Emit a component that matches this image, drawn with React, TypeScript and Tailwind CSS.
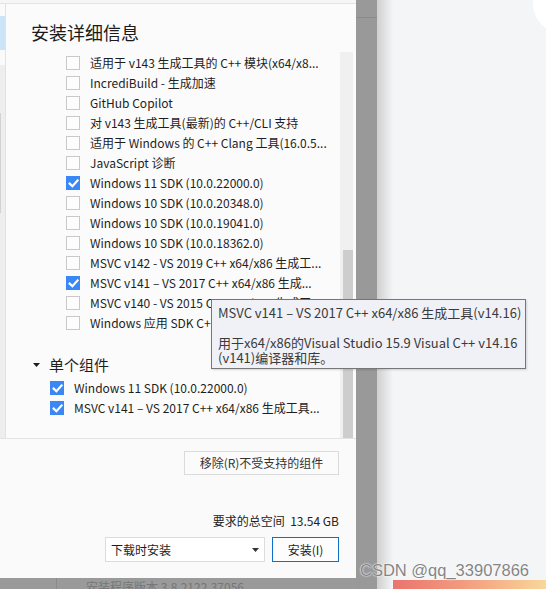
import React from "react";

function Box({ checked }: { checked?: boolean }) {
  if (checked) {
    return (
      <span className="flex h-[14px] w-[14px] shrink-0 items-center justify-center bg-[#3b87f5]">
        <svg width="11" height="11" viewBox="0 0 10 10">
          <path d="M1.5 5.1 L4 7.5 L8.7 2.3" stroke="white" strokeWidth="2" fill="none" strokeLinecap="square" />
        </svg>
      </span>
    );
  }
  return <span className="h-[14px] w-[14px] shrink-0 border border-[#c9c9c9] bg-[#fdfdfd]" />;
}

const rows: { t: string; c?: boolean }[] = [
  { t: "适用于 v143 生成工具的 C++ 模块(x64/x8..." },
  { t: "IncrediBuild - 生成加速" },
  { t: "GitHub Copilot" },
  { t: "对 v143 生成工具(最新)的 C++/CLI 支持" },
  { t: "适用于 Windows 的 C++ Clang 工具(16.0.5..." },
  { t: "JavaScript 诊断" },
  { t: "Windows 11 SDK (10.0.22000.0)", c: true },
  { t: "Windows 10 SDK (10.0.20348.0)" },
  { t: "Windows 10 SDK (10.0.19041.0)" },
  { t: "Windows 10 SDK (10.0.18362.0)" },
  { t: "MSVC v142 - VS 2019 C++ x64/x86 生成工..." },
  { t: "MSVC v141 – VS 2017 C++ x64/x86 生成...", c: true },
  { t: "MSVC v140 - VS 2015 C++ x64/x86 生成工..." },
  { t: "Windows 应用 SDK C++ 模板" },
];

export default function App() {
  return (
    <div className="relative flex h-[589px] w-[546px] overflow-hidden bg-[#f4f5f7] font-['Noto_Sans_CJK_SC','Noto_Sans',sans-serif] text-[#1e1e1e]">
      {/* installer window */}
      <div className="flex w-[356px] shrink-0 flex-col bg-[#fafafa]">
        <div className="h-[4px] shrink-0 border-b border-[#e4e4e4] bg-[#f6f6f6]" />
        <div className="flex h-[435px] shrink-0 border-b border-[#e3e3e3]">
          {/* left strip */}
          <div className="flex w-[6px] shrink-0 flex-col border-r border-[#e2e2e2]">
            <div className="h-[12px] bg-[#fafafa]" />
            <div className="h-[34px] bg-[#cce4f7]" />
            <div className="h-[15px] bg-[#fafafa]" />
            <div className="flex-1 bg-[#eeeeee]">
              <div className="ml-0 mt-[48px] h-[100px] w-[1px] bg-[#d2d2d2]" />
            </div>
          </div>
          {/* content */}
          <div className="flex flex-1 flex-col bg-[#fbfbfb]">
            <div className="pl-[25px] pt-[16px] text-[18px] leading-[24px] text-[#1b1b1b]">安装详细信息</div>
            <div className="mt-[8px] flex flex-1">
              <div className="flex-1 pt-[1px] text-[12px]">
                {rows.map((r, i) => (
                  <div key={i} className="flex h-[20px] items-center pl-[60px]">
                    <Box checked={r.c} />
                    <span className="ml-[10px] whitespace-nowrap leading-[20px]">{r.t}</span>
                  </div>
                ))}
                <div className="mt-[22px] flex h-[20px] items-center pl-[27px]">
                  <svg width="7" height="4" viewBox="0 0 7 4">
                    <path d="M0 0 L7 0 L3.5 4 Z" fill="#1e1e1e" />
                  </svg>
                  <span className="ml-[9px] text-[15px] leading-[20px]">单个组件</span>
                </div>
                <div className="mt-[3px] flex h-[20px] items-center pl-[44px]">
                  <Box checked />
                  <span className="ml-[10px] whitespace-nowrap">Windows 11 SDK (10.0.22000.0)</span>
                </div>
                <div className="flex h-[20px] items-center pl-[44px]">
                  <Box checked />
                  <span className="ml-[10px] whitespace-nowrap">MSVC v141 – VS 2017 C++ x64/x86 生成工具...</span>
                </div>
              </div>
              <div className="flex w-[13px] shrink-0 flex-col bg-[#f0f0f0]">
                <div className="ml-[3px] mt-[198px] flex-1 bg-[#cdcdcd]" />
              </div>
              <div className="w-[3px] shrink-0" />
            </div>
          </div>
        </div>
        {/* bottom area */}
        <div className="flex flex-1 flex-col items-end pr-[17px] text-[12px]">
          <div className="mt-[12px] flex h-[24px] w-[155px] items-center justify-center border border-[#dadada] bg-[#fbfbfb] text-[#333]">
            移除(R)不受支持的组件
          </div>
          <div className="mt-[38px] h-[16px] leading-[16px] text-[#222]">要求的总空间&nbsp;&nbsp;13.54 GB</div>
          <div className="mt-[8px] flex gap-[7px]">
            <div className="flex h-[25px] w-[160px] items-center justify-between border border-[#dcdcdc] bg-white pl-[5px] pr-[5px]">
              <span>下载时安装</span>
              <svg width="7" height="4" viewBox="0 0 7 4">
                <path d="M0 0 L7 0 L3.5 4 Z" fill="#333" />
              </svg>
            </div>
            <div className="flex h-[25px] w-[67px] items-center justify-center border border-[#0f6fc6] bg-[#fdfdfd]">安装(I)</div>
          </div>
        </div>
        <div className="flex h-[11px] shrink-0 bg-[#9a9a9a]">
          <div className="w-[57px] border-r border-[#8a8a8a]" />
          <div className="pl-[29px] pt-[1px] text-[12px] leading-[16px] text-[#767676]">安装程序版本 3.8.2122.37056</div>
        </div>
      </div>
      {/* overlay band */}
      <div className="flex w-[21px] shrink-0 flex-col bg-[#999999]">
        <div className="h-[18px] border-b border-[#8a8a8a]" />
      </div>
      {/* browser page */}
      <div className="relative flex flex-1 flex-col bg-[#f4f5f7]">
        <div className="absolute left-0 top-0 h-full w-[16px] bg-gradient-to-r from-[#cfcfcf] to-[#f4f5f7]" />
        <div className="absolute left-[156px] top-[-25px] h-[58px] w-[58px] rounded-full bg-white" />
        <div className="mt-auto h-[9px] bg-gradient-to-r from-[#e86a6a] via-[#f29a7e] to-[#f8d79a]" />
      </div>
      {/* tooltip */}
      <div className="absolute left-[211px] top-[299px] h-[70px] w-[315px] border border-[#767676] bg-[#f0f1f6] pl-[6px] pt-[5px] text-[13px] leading-[15px] text-[#3a3a3a] shadow-[1px_1px_2px_rgba(0,0,0,0.15)]">
        <div className="whitespace-nowrap">MSVC v141 – VS 2017 C++ x64/x86 生成工具(v14.16)</div>
        <div className="h-[15px]" />
        <div className="whitespace-nowrap">用于x64/x86的Visual Studio 15.9 Visual C++ v14.16</div>
        <div className="whitespace-nowrap">(v141)编译器和库。</div>
      </div>
      {/* watermark */}
      <div className="absolute left-[360px] top-[560px] font-['Liberation_Sans',sans-serif] text-[16.5px] leading-[20px] text-[#858585] [text-shadow:0_0_1px_#fff,0_0_2px_#fff]">
        CSDN @qq_33907866
      </div>
    </div>
  );
}
